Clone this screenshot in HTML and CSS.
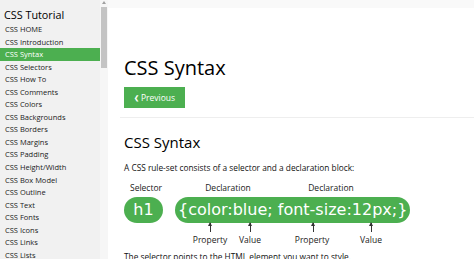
FILE: index.html
```html
<!DOCTYPE html>
<html>
<head>
<meta charset="utf-8">
<link rel="stylesheet" href="styles.css">
</head>
<body>
<div class="page">
  <nav class="sidebar">
    <div class="side-title">CSS Tutorial</div>
    <a class="item">CSS HOME</a>
    <a class="item">CSS Introduction</a>
    <a class="item active">CSS Syntax</a>
    <a class="item">CSS Selectors</a>
    <a class="item">CSS How To</a>
    <a class="item">CSS Comments</a>
    <a class="item">CSS Colors</a>
    <a class="item">CSS Backgrounds</a>
    <a class="item">CSS Borders</a>
    <a class="item">CSS Margins</a>
    <a class="item">CSS Padding</a>
    <a class="item">CSS Height/Width</a>
    <a class="item">CSS Box Model</a>
    <a class="item">CSS Outline</a>
    <a class="item">CSS Text</a>
    <a class="item">CSS Fonts</a>
    <a class="item">CSS Icons</a>
    <a class="item">CSS Links</a>
    <a class="item">CSS Lists</a>
  </nav>
  <div class="scrollbar"><div class="sb-arrow"></div><div class="thumb"></div></div>
  <main class="main">
    <div class="topstrip"></div>
    <div class="content">
      <h1 class="title">CSS Syntax</h1>
      <a class="btn"><span class="chev">&#10094;</span> Previous</a>
      <hr class="rule">
      <h2 class="subtitle">CSS Syntax</h2>
      <p class="text">A CSS rule-set consists of a selector and a declaration block:</p>
      <div class="diagram">
        <span class="lbl top" style="left:22px">Selector</span>
        <span class="lbl top" style="left:104px">Declaration</span>
        <span class="lbl top" style="left:207px">Declaration</span>
        <div class="pills">
          <div class="pill sel">h1</div>
          <div class="pill decl">{color:blue; font-size:12px;}</div>
        </div>
        <span class="arrow" style="left:86px"></span>
        <span class="arrow" style="left:126px"></span>
        <span class="arrow" style="left:189px"></span>
        <span class="arrow" style="left:247px"></span>
        <span class="lbl bottom" style="left:86px">Property</span>
        <span class="lbl bottom" style="left:126px">Value</span>
        <span class="lbl bottom" style="left:188px">Property</span>
        <span class="lbl bottom" style="left:247px">Value</span>
      </div>
      <p class="text last">The selector points to the HTML element you want to style.</p>
    </div>
  </main>
</div>
</body>
</html>
```

FILE: styles.css
```css
* { box-sizing: border-box; }
html, body { margin: 0; padding: 0; }
body {
  font-family: "Open Sans", "Noto Sans", sans-serif;
  color: #000;
  background: #fff;
  width: 474px;
  height: 259px;
  overflow: hidden;
}
.page {
  display: flex;
  height: 259px;
}
.sidebar {
  width: 100px;
  flex: none;
  background: #f1f1f1;
  display: flex;
  flex-direction: column;
  padding-top: 7px;
  overflow: hidden;
}
.side-title {
  flex: none;
  font-size: 10.8px;
  line-height: 16px;
  padding-left: 4px;
  color: #000;
}
.item {
  flex: none;
  display: block;
  font-size: 7.5px;
  line-height: 12.55px;
  height: 12.55px;
  padding-left: 5px;
  color: #1a1a1a;
  white-space: nowrap;
}
.item.active {
  background: #4caf50;
  color: #fff;
}
.scrollbar {
  width: 8px;
  flex: none;
  background: #f6f6f6;
  display: flex;
  flex-direction: column;
  align-items: center;
}
.sb-arrow {
  margin-top: 1px;
  width: 0;
  height: 0;
  border-left: 2px solid transparent;
  border-right: 2px solid transparent;
  border-bottom: 3px solid #a0a0a0;
}
.thumb {
  margin-top: 3px;
  width: 6px;
  height: 61px;
  background: #c4c4c4;
}
.main {
  flex: 1;
  display: flex;
  flex-direction: column;
  min-width: 0;
}
.topstrip {
  height: 8px;
  background: #f9f9f9;
  flex: none;
}
.content {
  padding-left: 16px;
  display: flex;
  flex-direction: column;
  align-items: flex-start;
}
.title {
  margin: 48px 0 0 0;
  font-size: 20px;
  line-height: 24px;
  font-weight: 400;
}
.btn {
  margin-top: 7px;
  background: #4caf50;
  color: #fff;
  font-size: 8.5px;
  height: 21px;
  width: 61px;
  display: flex;
  align-items: center;
  justify-content: center;
  gap: 2px;
}
.chev { font-size: 6px; font-weight: 700; }
.rule {
  margin: 9px 0 0 -4px;
  width: calc(100% + 4px);
  align-self: stretch;
  border: 0;
  border-top: 1px solid #eeeeee;
  height: 0;
}
.subtitle {
  margin: 15px 0 0 0;
  font-size: 15px;
  line-height: 18px;
  font-weight: 400;
}
.text {
  margin: 11px 0 0 0;
  font-size: 8.3px;
  line-height: 12px;
  color: #111;
}
.diagram {
  position: relative;
  margin-top: 0;
  width: 300px;
  height: 77px;
  flex: none;
}
.lbl {
  position: absolute;
  font-size: 8.5px;
  line-height: 10px;
  color: #222;
  transform: translateX(-50%);
  white-space: nowrap;
}
.lbl.top { top: 9px; }
.lbl.bottom { top: 61px; }
.pills {
  position: absolute;
  top: 23px;
  left: 0;
  display: flex;
  gap: 12px;
}
.pill {
  height: 26px;
  background: #4caf50;
  color: #fff;
  border-radius: 13px;
  font-family: "DejaVu Sans", sans-serif;
  font-size: 16px;
  line-height: 26px;
  white-space: nowrap;
}
.pill.sel {
  width: 39px;
  text-align: center;
}
.pill.decl {
  width: 235px;
  padding-left: 3px;
}
.arrow {
  position: absolute;
  top: 49px;
  width: 1px;
  height: 9px;
  background: #333;
}
.arrow::before {
  content: "";
  position: absolute;
  top: -1px;
  left: -2px;
  border-left: 2.5px solid transparent;
  border-right: 2.5px solid transparent;
  border-bottom: 4px solid #333;
}
.text.last { margin-top: 0; }
```
